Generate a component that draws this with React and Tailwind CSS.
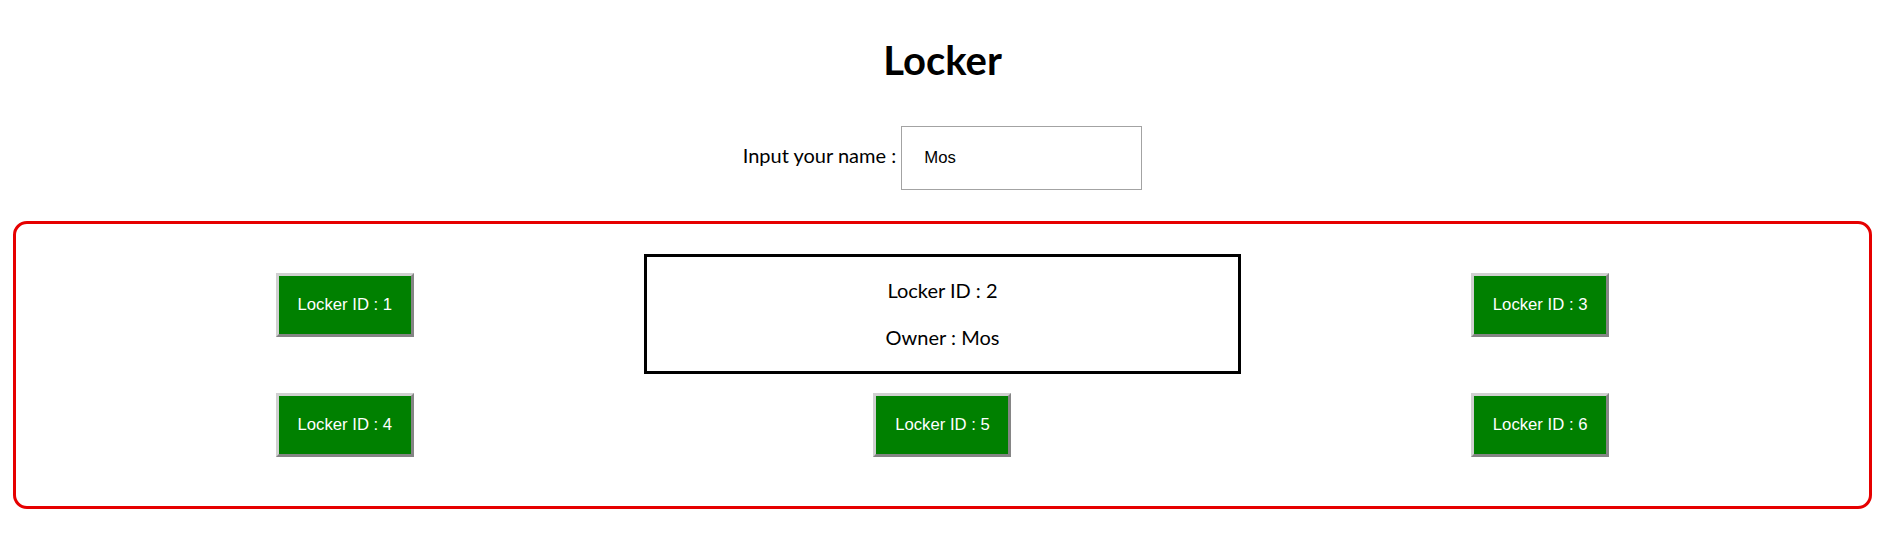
import { useState } from 'react'

const lockers = [1, 2, 3, 4, 5, 6]

export default function App() {
  const [name, setName] = useState('Mos')
  const [owned, setOwned] = useState({ 2: 'Mos' })

  const claim = (id) => {
    if (!name.trim()) return
    setOwned((prev) => ({ ...prev, [id]: name.trim() }))
  }

  return (
    <div className="ml-[13px] mr-[24px] bg-white font-['Lato','Liberation_Sans',sans-serif] text-black">
      <h1 className="pt-[34px] text-center text-[40px] font-bold leading-[53px]">Locker</h1>

      <div className="mt-[39px] text-center text-[20px] leading-[27px]">
        <span>Input your name : </span>
        <input
          value={name}
          onChange={(e) => setName(e.target.value)}
          className="h-[64px] w-[241px] border border-[#a3a3a3] px-[22px] align-baseline font-['Liberation_Sans',Arial,sans-serif] text-[16.7px] text-black outline-none"
        />
      </div>

      <div className="mt-[31px] grid grid-cols-3 rounded-[14px] border-[3px] border-[#e60000] p-[30px]">
        {lockers.map((id) =>
          owned[id] ? (
            <div key={id} className="border-[3px] border-black text-center text-[20px] leading-[27px]">
              <p className="my-[20px]">Locker ID : {id}</p>
              <p className="my-[20px]">Owner : {owned[id]}</p>
            </div>
          ) : (
            <div key={id} className="text-center">
              <button
                onClick={() => claim(id)}
                className="my-[19px] h-[64px] w-[138px] border-[3px] border-t-[#d0d0d0] border-l-[#d0d0d0] border-r-[#858585] border-b-[#858585] bg-[#008000] font-['Liberation_Sans',Arial,sans-serif] text-[16.7px] text-white"
              >
                Locker ID : {id}
              </button>
            </div>
          )
        )}
      </div>
    </div>
  )
}
